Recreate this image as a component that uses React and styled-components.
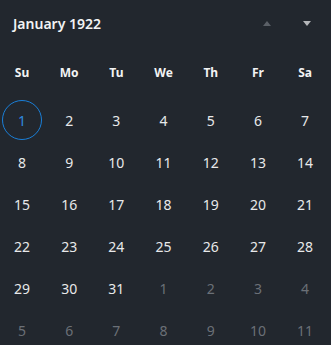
import styled, { createGlobalStyle } from "styled-components";

const GlobalStyle = createGlobalStyle`
  html, body {
    margin: 0;
    padding: 0;
    background: #22272e;
  }
  body {
    font-family: "Noto Sans", "Open Sans", sans-serif;
  }
`;

const Calendar = styled.div`
  width: 331px;
  height: 345px;
  background: #22272e;
  color: #e8e9ea;
  box-sizing: border-box;
  overflow: hidden;
`;

const Header = styled.div`
  display: flex;
  align-items: center;
  height: 46px;
  padding: 0 17px 0 13px;
`;

const Title = styled.div`
  flex: 1;
  font-size: 14px;
  font-weight: 600;
  color: #f2f3f4;
`;

const NavButton = styled.button`
  width: 14px;
  height: 14px;
  padding: 0;
  margin-left: ${(p) => p.$gap || 0}px;
  border: none;
  background: none;
  display: flex;
  align-items: center;
  justify-content: center;
  cursor: pointer;
`;

const Arrow = styled.span`
  width: 0;
  height: 0;
  border-left: 4.5px solid transparent;
  border-right: 4.5px solid transparent;
  ${(p) =>
    p.$up
      ? `border-bottom: 5px solid ${p.$color};`
      : `border-top: 5px solid ${p.$color};`}
`;

const Grid = styled.div`
  display: grid;
  grid-template-columns: repeat(7, 40px);
  column-gap: 7.2px;
  row-gap: 2px;
  padding-left: 2px;
`;

const WeekDay = styled.div`
  height: 52px;
  display: flex;
  align-items: center;
  justify-content: center;
  font-size: 12px;
  font-weight: 700;
  color: #f2f3f4;
`;

const Day = styled.div`
  width: 40px;
  height: 40px;
  box-sizing: border-box;
  border-radius: 50%;
  display: flex;
  align-items: center;
  justify-content: center;
  font-size: 14px;
  color: ${(p) => (p.$today ? "#2f8ae0" : p.$muted ? "#6b7077" : "#e8e9ea")};
  border: ${(p) => (p.$today ? "1.5px solid #1a7fd8" : "none")};
`;

const weekDays = ["Su", "Mo", "Tu", "We", "Th", "Fr", "Sa"];

const days = [
  ...Array.from({ length: 31 }, (_, i) => ({ n: i + 1, muted: false })),
  ...Array.from({ length: 11 }, (_, i) => ({ n: i + 1, muted: true })),
];

const App = () => {
  return (
    <>
      <GlobalStyle />
      <Calendar>
        <Header>
          <Title>January 1922</Title>
          <NavButton>
            <Arrow $up $color="#5b6067" />
          </NavButton>
          <NavButton $gap={26}>
            <Arrow $color="#b4b6b9" />
          </NavButton>
        </Header>
        <Grid>
          {weekDays.map((d) => (
            <WeekDay key={d}>{d}</WeekDay>
          ))}
          {days.map((d, i) => (
            <Day key={i} $muted={d.muted} $today={i === 0}>
              {d.n}
            </Day>
          ))}
        </Grid>
      </Calendar>
    </>
  );
};

export default App;
